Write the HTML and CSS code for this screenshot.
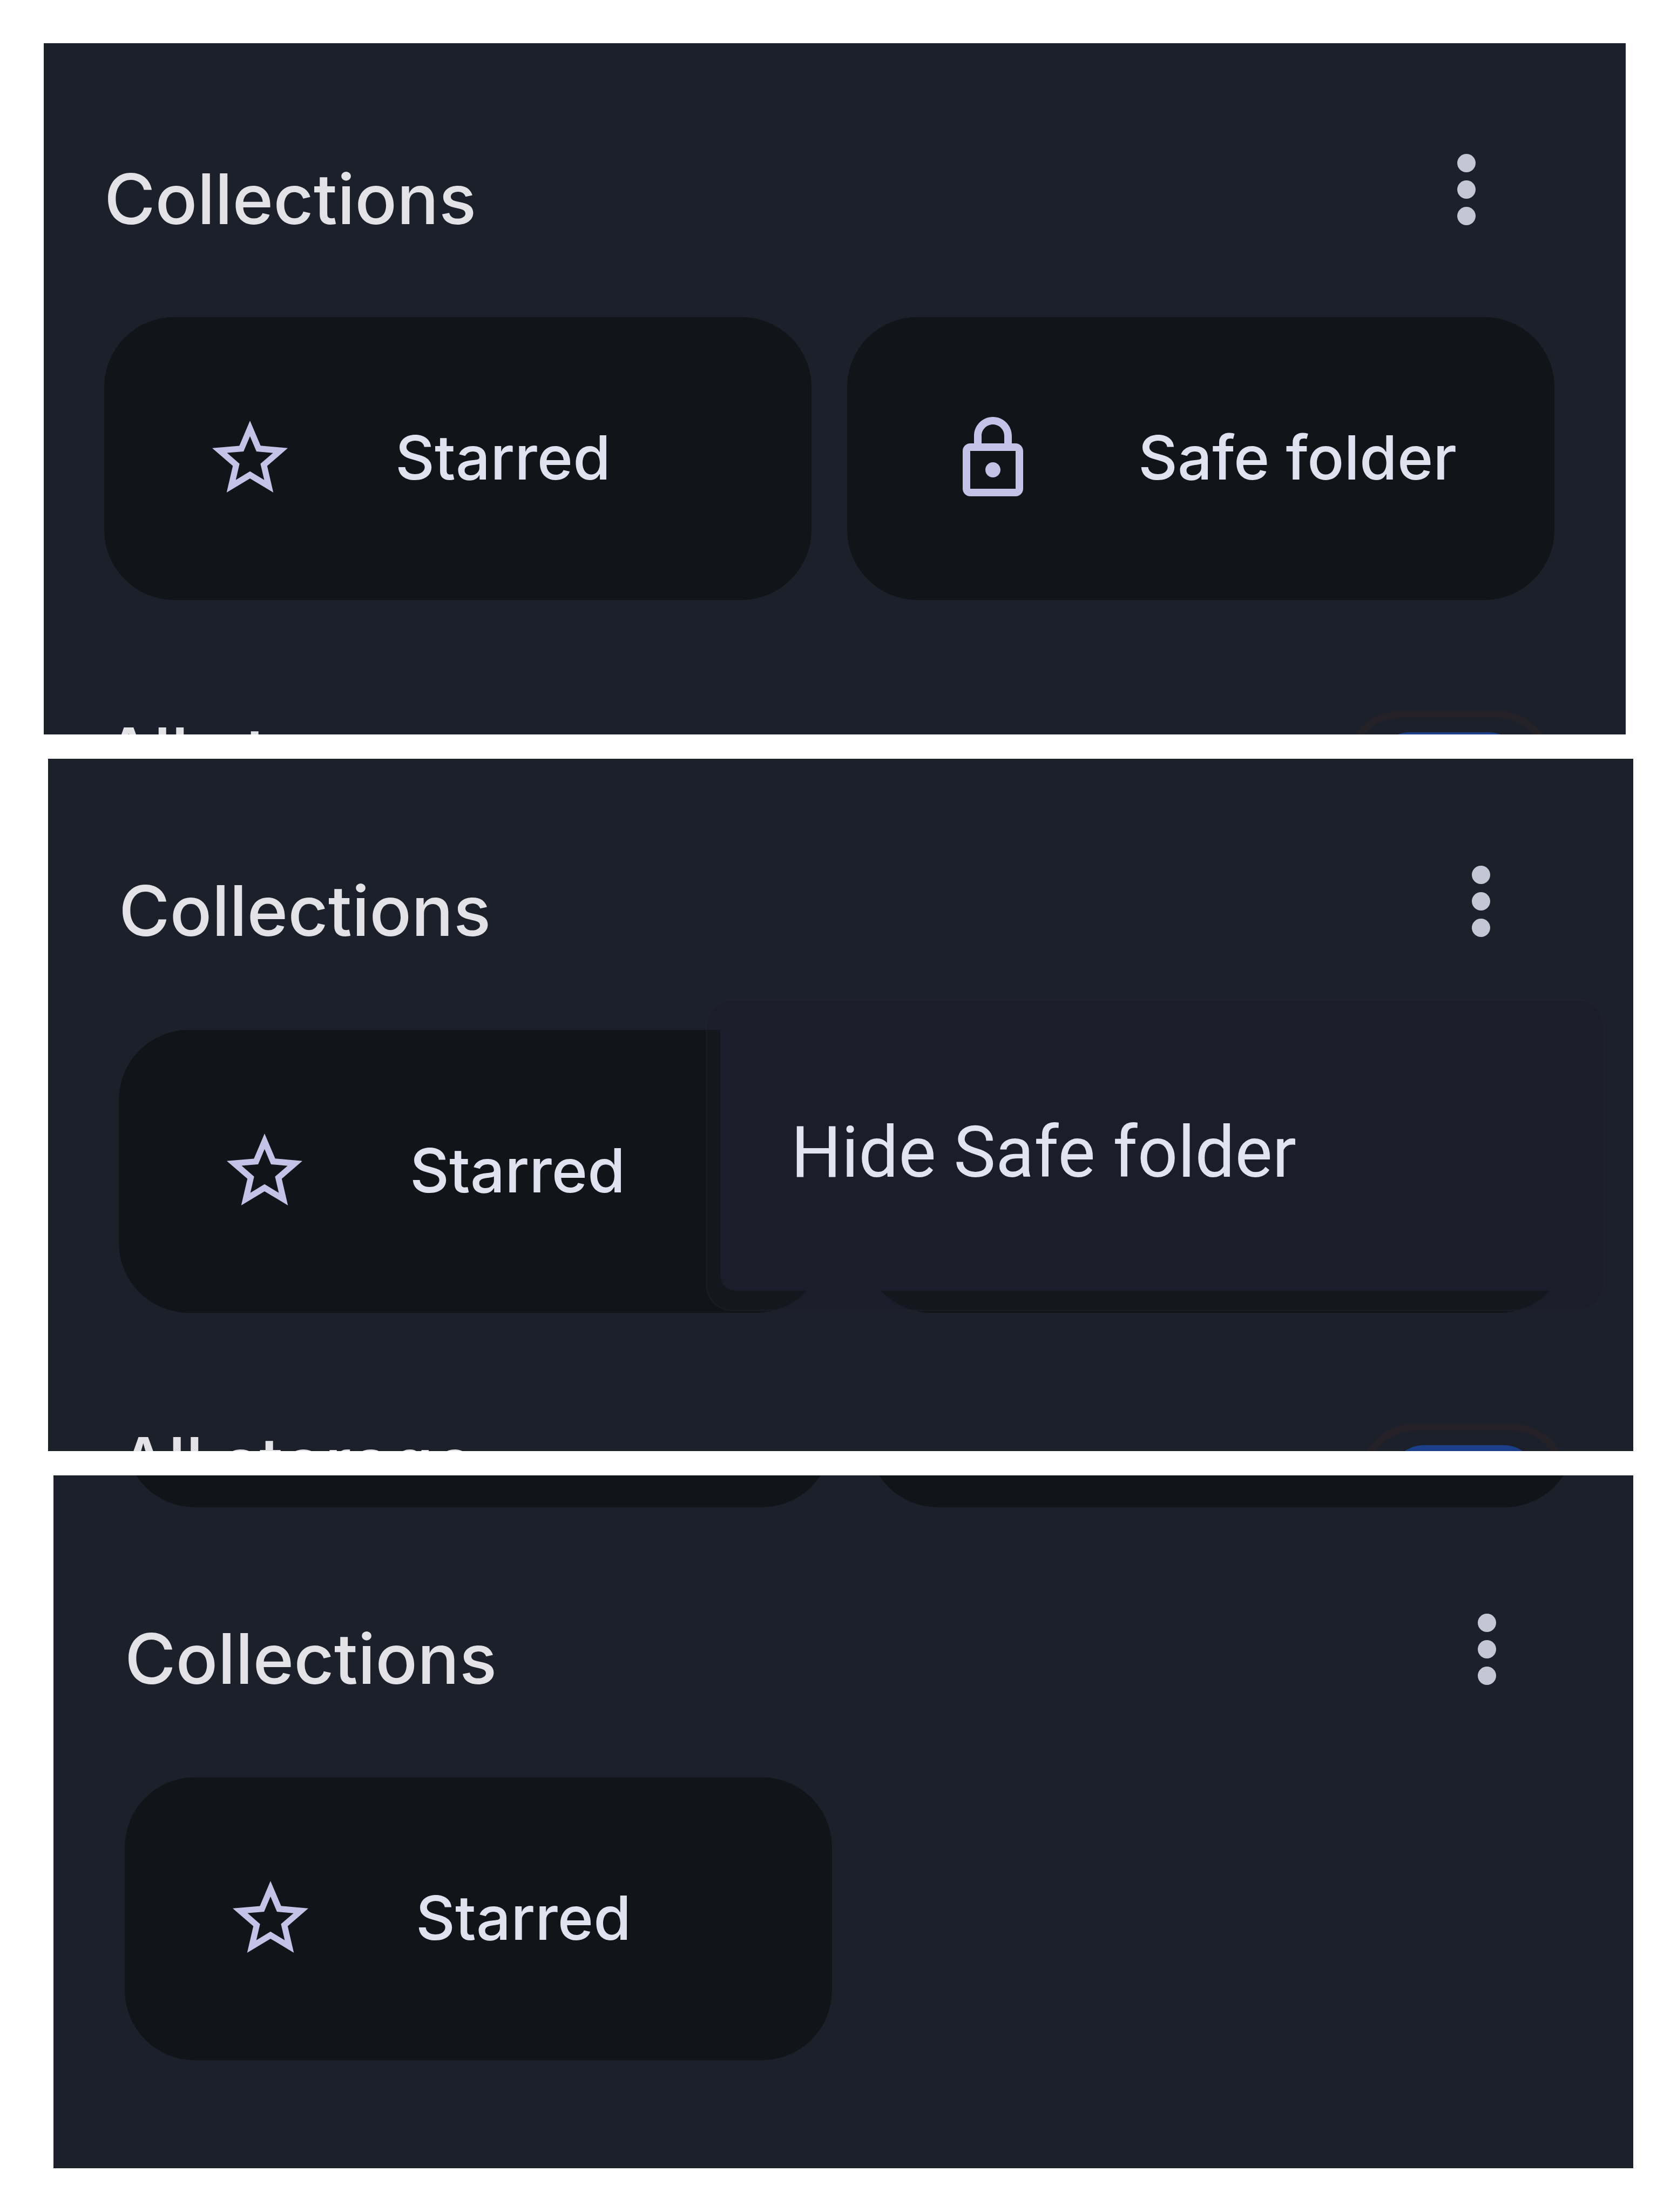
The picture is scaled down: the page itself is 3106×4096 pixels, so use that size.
FILE: index.html
```html
<!DOCTYPE html>
<html lang="en">
<head>
    <meta charset="UTF-8">
    <meta name="viewport" content="width=device-width, initial-scale=1.0">
    <title>Collections</title>
    <link rel="stylesheet" href="styles.css">
</head>
<body>
    <main class="page">
        <!-- collections with both cards -->
        <section class="panel panel-one">
            <header class="section-head">
                <h2>Collections</h2>
                <svg class="more" viewBox="0 0 34 132"><circle cx="17" cy="17" r="17"/><circle cx="17" cy="66" r="17"/><circle cx="17" cy="115" r="17"/></svg>
            </header>
            <div class="cards">
                <div class="card">
                    <svg class="icon" viewBox="0 0 24 24"><path d="M22 9.24l-7.19-.62L12 2 9.19 8.63 2 9.24l5.46 4.73L5.82 21 12 17.27 18.18 21l-1.63-7.03L22 9.24zM12 15.4l-3.76 2.27 1-4.28-3.32-2.88 4.38-.38L12 6.1l1.71 4.04 4.38.38-3.32 2.88 1 4.28L12 15.4z"/></svg>
                    <span>Starred</span>
                </div>
                <div class="card">
                    <svg class="icon" viewBox="0 0 24 24"><path d="M18 8h-1V6c0-2.76-2.24-5-5-5S7 3.24 7 6v2H6c-1.1 0-2 .9-2 2v10c0 1.1.9 2 2 2h12c1.1 0 2-.9 2-2V10c0-1.1-.9-2-2-2zM9 6c0-1.66 1.34-3 3-3s3 1.34 3 3v2H9V6zm9 14H6V10h12v10zm-6-3c1.1 0 2-.9 2-2s-.9-2-2-2-2 .9-2 2 .9 2 2 2z"/></svg>
                    <span>Safe folder</span>
                </div>
            </div>
            <div class="storage-head">
                <h2>All storage</h2>
                <div class="ring"><div class="ring-fill"></div></div>
            </div>
        </section>

        <!-- menu open over the cards -->
        <section class="panel panel-two">
            <header class="section-head">
                <h2>Collections</h2>
                <svg class="more" viewBox="0 0 34 132"><circle cx="17" cy="17" r="17"/><circle cx="17" cy="66" r="17"/><circle cx="17" cy="115" r="17"/></svg>
            </header>
            <div class="cards">
                <div class="card">
                    <svg class="icon" viewBox="0 0 24 24"><path d="M22 9.24l-7.19-.62L12 2 9.19 8.63 2 9.24l5.46 4.73L5.82 21 12 17.27 18.18 21l-1.63-7.03L22 9.24zM12 15.4l-3.76 2.27 1-4.28-3.32-2.88 4.38-.38L12 6.1l1.71 4.04 4.38.38-3.32 2.88 1 4.28L12 15.4z"/></svg>
                    <span>Starred</span>
                </div>
                <div class="card"></div>
            </div>
            <div class="storage-head">
                <h2>All storage</h2>
                <div class="ring"><div class="ring-fill"></div></div>
            </div>
            <div class="menu">Hide Safe folder</div>
        </section>

        <!-- safe folder hidden, list scrolled a little -->
        <section class="panel panel-three">
            <div class="cards cards-scrolled">
                <div class="card"></div>
                <div class="card"></div>
            </div>
            <header class="section-head">
                <h2>Collections</h2>
                <svg class="more" viewBox="0 0 34 132"><circle cx="17" cy="17" r="17"/><circle cx="17" cy="66" r="17"/><circle cx="17" cy="115" r="17"/></svg>
            </header>
            <div class="cards">
                <div class="card">
                    <svg class="icon" viewBox="0 0 24 24"><path d="M22 9.24l-7.19-.62L12 2 9.19 8.63 2 9.24l5.46 4.73L5.82 21 12 17.27 18.18 21l-1.63-7.03L22 9.24zM12 15.4l-3.76 2.27 1-4.28-3.32-2.88 4.38-.38L12 6.1l1.71 4.04 4.38.38-3.32 2.88 1 4.28L12 15.4z"/></svg>
                    <span>Starred</span>
                </div>
            </div>
        </section>
    </main>
</body>
</html>
```

FILE: styles.css
```css
body {
    margin: 0;
    background-color: #fff;
    font-family: Inter, Roboto, sans-serif;
}
.page {
    display: flex;
    flex-direction: column;
    gap: 45px;
    padding-top: 80px;
}
.panel {
    position: relative;
    overflow: hidden;
    background-color: #1c202b;
    padding-left: 112px;
    box-sizing: border-box;
}
.panel-one {
    width: 2930px;
    height: 1280px;
    margin-left: 81px;
}
.panel-two {
    width: 2936px;
    height: 1282px;
    margin-left: 89px;
    padding-left: 131px;
}
.panel-three {
    width: 2926px;
    height: 1283px;
    margin-left: 99px;
    padding-left: 132px;
}
.section-head {
    display: flex;
    justify-content: space-between;
    width: 2540px;
    height: 507px;
    box-sizing: border-box;
    padding-top: 213px;
}
.panel-two .section-head {
    height: 502px;
    padding-top: 206px;
}
.panel-three .section-head {
    height: 500px;
    padding-top: 205px;
}
h2 {
    margin: 0;
    font-size: 129px;
    line-height: 150px;
    font-weight: 500;
    color: #e3e2e6;
}
.more {
    width: 34px;
    height: 132px;
    margin-top: -8px;
    fill: #c4c6d6;
}
.cards {
    display: flex;
    gap: 66px;
}
.cards-scrolled {
    margin-top: -465px;
}
.card {
    display: flex;
    align-items: center;
    gap: 185px;
    width: 1310px;
    height: 524px;
    box-sizing: border-box;
    padding: 0 0 4px 186px;
    border-radius: 130px;
    background-color: #111419;
    font-size: 113px;
    font-weight: 500;
    color: #e1e2f0;
}
.icon {
    width: 168px;
    height: 168px;
    margin-top: 4px;
    fill: #c5c2e8;
}
.storage-head {
    display: flex;
    justify-content: space-between;
    width: 2687px;
    box-sizing: border-box;
    margin-top: 208px;
    padding-right: 3px;
}
.panel-two .storage-head {
    margin-top: 202px;
}
.ring {
    width: 387px;
    height: 300px;
    margin-top: -3px;
    box-sizing: border-box;
    border: 13px solid #242129;
    border-radius: 105px;
    padding-top: 27px;
}
.panel-two .ring {
    margin-top: 3px;
}
.ring-fill {
    width: 278px;
    height: 200px;
    margin: 0 auto;
    border-radius: 66px;
    background-color: #1c3f8c;
}
.menu {
    position: absolute;
    z-index: 1;
    left: 1245px;
    top: 460px;
    width: 1616px;
    height: 525px;
    box-sizing: border-box;
    padding: 194px 0 0 131px;
    border-radius: 28px;
    background-color: #1f1d2b;
    font-family: Roboto, sans-serif;
    font-size: 131px;
    line-height: 150px;
    color: #e3e3ef;
}
/* faint outline the menu leaves around itself */
.menu::before {
    content: "";
    position: absolute;
    z-index: -1;
    top: -15px;
    right: -22px;
    bottom: -38px;
    left: -27px;
    border: 3px solid rgba(38, 34, 42, 0.4);
    border-radius: 50px;
    background-color: rgba(26, 30, 40, 0.35);
}
```
